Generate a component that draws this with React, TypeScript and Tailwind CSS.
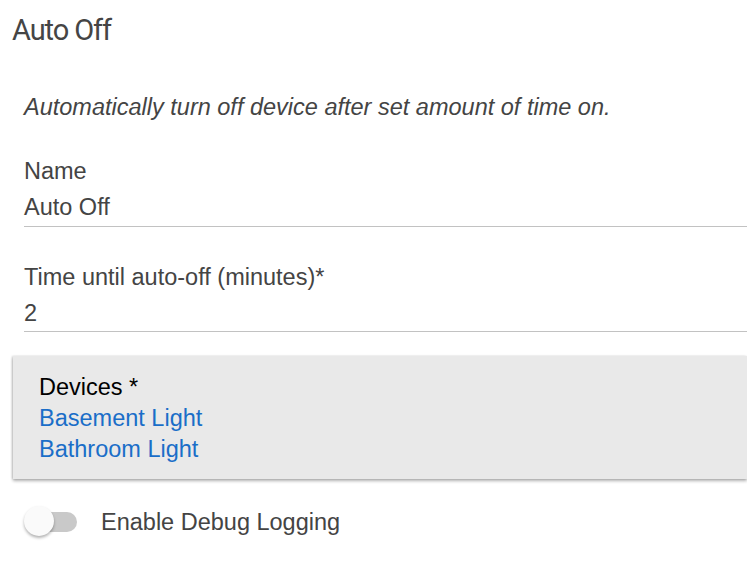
export default function App() {
  const body = "font-['Liberation_Sans',Arial,sans-serif] text-[23.5px] leading-[31px]"

  return (
    <div className="min-h-screen w-full overflow-hidden bg-white">
      <div className="pl-[12px]">
        {/* page title */}
        <h1 className="pt-[10px] font-['Roboto',sans-serif] text-[29px] leading-[40px] font-normal tracking-[-1.1px] text-[#454545]">
          Auto Off
        </h1>

        <div className={`${body} text-[#444]`}>
          <p className="mt-[42px] pl-[12px] italic">
            Automatically turn off device after set amount of time on.
          </p>

          {/* name field */}
          <div className="mt-[33px] ml-[12px] flex flex-col gap-[5px] border-b border-[#c2c2c2] pb-[3px]">
            <label>Name</label>
            <div>Auto Off</div>
          </div>

          {/* minutes field */}
          <div className="mt-[35px] ml-[12px] flex flex-col gap-[5px] border-b border-[#c2c2c2] pb-[2px]">
            <label>Time until auto-off (minutes)*</label>
            <div>2</div>
          </div>

          {/* devices picker */}
          <div className="mt-[24px] ml-[1px] bg-[#e9e9e9] pt-[16px] pb-[14px] pl-[26px] shadow-[0_2px_3px_rgba(0,0,0,0.3),-1px_0_2px_rgba(0,0,0,0.15)]">
            <div className="text-black">Devices *</div>
            <div className="text-[#1a6ec8]">Basement Light</div>
            <div className="text-[#1a6ec8]">Bathroom Light</div>
          </div>

          {/* debug toggle */}
          <div className="mt-[26px] ml-[12px] flex items-center">
            <div className="relative h-[30px] w-[53px]">
              <div className="absolute left-[1px] top-[6px] h-[20px] w-[52px] rounded-full bg-[#c9c9c9]" />
              <div className="absolute left-0 top-0 h-[30px] w-[30px] rounded-full bg-[#fafafa] shadow-[0_2px_3px_rgba(0,0,0,0.3)]" />
            </div>
            <span className="relative top-[2px] ml-[24px]">Enable Debug Logging</span>
          </div>
        </div>
      </div>
    </div>
  )
}
